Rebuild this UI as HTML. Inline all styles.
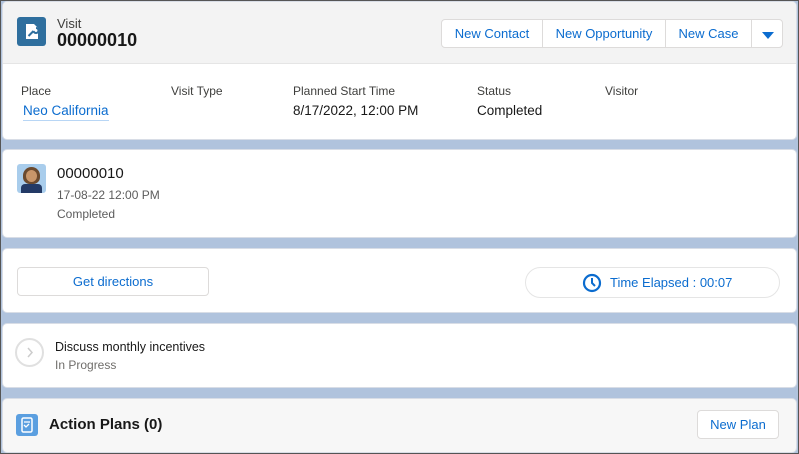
<!DOCTYPE html>
<html><head><meta charset="utf-8"><style>
*{box-sizing:border-box;margin:0;padding:0}
body{width:799px;height:454px;background:#b0c3dd;font-family:"Liberation Sans",Arial,sans-serif;position:relative;overflow:hidden;border:1px solid #555;}
.card{position:absolute;left:2px;width:793px;background:#fff;border-radius:4px;box-shadow:0 0 0 1px #d8dde6}
.t{position:absolute;white-space:nowrap}
.lbl{font-size:12px;color:#3e3e3c}
.val{font-size:13.5px;color:#181818}
</style></head><body>
<div class="card" style="top:1px;height:137px;overflow:hidden">
 <div style="position:absolute;left:0;top:0;width:100%;height:62px;background:#f3f3f3;border-bottom:1px solid #e5e5e5"></div>
 <div style="position:absolute;left:14px;top:15px;width:29px;height:29px;background:#2f6f9e;border-radius:3px">
  <svg width="29" height="29" viewBox="0 0 29 29"><path d="M9 7h8l4 4v11H9z" fill="#fff"/><path d="M11.5 19l5-5m0 0a2.5 2.5 0 1 0 2.5-3" stroke="#2f6f9e" stroke-width="2" fill="none"/></svg>
 </div>
 <div class="t" style="left:54px;top:14px;font-size:13px;color:#3e3e3c">Visit</div>
 <div class="t" style="left:54px;top:28px;font-size:18px;font-weight:bold;color:#181818">00000010</div>
 <div style="position:absolute;left:438px;top:17px;width:342px;height:29px;border:1px solid #dddbda;border-radius:4px;background:#fff;display:flex;font-size:13px;color:#0b6ccf">
  <div style="width:101px;border-right:1px solid #dddbda;text-align:center;line-height:27px">New Contact</div>
  <div style="width:123px;border-right:1px solid #dddbda;text-align:center;line-height:27px">New Opportunity</div>
  <div style="width:86px;border-right:1px solid #dddbda;text-align:center;line-height:27px">New Case</div>
  <div style="flex:1;position:relative"><div style="position:absolute;left:10px;top:12px;border-left:6px solid transparent;border-right:6px solid transparent;border-top:7px solid #0b6ccf"></div></div>
 </div>
 <div class="t lbl" style="left:18px;top:82px">Place</div>
 <div class="t" style="left:20px;top:101px;font-size:13.5px;color:#0b6ccf;border-bottom:1px solid #b8d6f5;padding-bottom:2px">Neo California</div>
 <div class="t lbl" style="left:168px;top:82px">Visit Type</div>
 <div class="t lbl" style="left:290px;top:82px">Planned Start Time</div>
 <div class="t val" style="left:290px;top:101px">8/17/2022, 12:00 PM</div>
 <div class="t lbl" style="left:474px;top:82px">Status</div>
 <div class="t val" style="left:474px;top:101px">Completed</div>
 <div class="t lbl" style="left:602px;top:82px">Visitor</div>
</div>
<div class="card" style="top:149px;height:87px">
 <div style="position:absolute;left:14px;top:14px;width:29px;height:29px;background:#a9cdec;border-radius:3px;overflow:hidden">
  <div style="position:absolute;left:6px;top:3px;width:17px;height:17px;border-radius:50% 50% 40% 40%;background:#6b4a2e"></div>
  <div style="position:absolute;left:9px;top:6px;width:11px;height:12px;border-radius:50%;background:#c8966a"></div>
  <div style="position:absolute;left:4px;top:20px;width:21px;height:9px;background:#233a66;border-radius:4px 4px 0 0"></div>
 </div>
 <div class="t" style="left:54px;top:15px;font-size:15px;color:#181818">00000010</div>
 <div class="t" style="left:54px;top:38px;font-size:12px;color:#5c5c5c">17-08-22 12:00 PM</div>
 <div class="t" style="left:54px;top:57px;font-size:12px;color:#5c5c5c">Completed</div>
</div>
<div class="card" style="top:248px;height:63px">
 <div style="position:absolute;left:14px;top:18px;width:192px;height:29px;border:1px solid #dddbda;border-radius:4px;text-align:center;line-height:27px;font-size:13px;color:#0b6ccf">Get directions</div>
 <div style="position:absolute;left:522px;top:18px;width:255px;height:31px;border:1px solid #e5e5e5;border-radius:16px;font-size:13px;color:#0b6ccf">
  <svg style="position:absolute;left:56px;top:5px" width="20" height="20" viewBox="0 0 20 20"><circle cx="10" cy="10" r="8" stroke="#0b6ccf" stroke-width="2.2" fill="none"/><path d="M10 5v5l3 3" stroke="#0b6ccf" stroke-width="2" fill="none"/></svg>
  <span class="t" style="left:84px;top:7px">Time Elapsed : 00:07</span>
 </div>
</div>
<div class="card" style="top:323px;height:63px">
 <div style="position:absolute;left:12px;top:14px;width:29px;height:29px;border:2px solid #e0e0e0;border-radius:50%"><svg width="25" height="25" viewBox="0 0 25 25"><path d="M11 8l4 4.5-4 4.5" stroke="#ccc" stroke-width="1.5" fill="none"/></svg></div>
 <div class="t" style="left:52px;top:16px;font-size:12.5px;color:#181818">Discuss monthly incentives</div>
 <div class="t" style="left:52px;top:34px;font-size:12px;color:#706e6b">In Progress</div>
</div>
<div class="card" style="top:398px;height:53px;background:#f7f7f7">
 <div style="position:absolute;left:13px;top:15px;width:22px;height:22px;background:#5b9fe0;border-radius:3px"><svg width="22" height="22" viewBox="0 0 22 22"><rect x="6" y="4" width="10" height="14" rx="1.5" fill="none" stroke="#fff" stroke-width="1.5"/><path d="M8 8h6M8 11l2 2 3-3" stroke="#fff" stroke-width="1.3" fill="none"/></svg></div>
 <div class="t" style="left:46px;top:17px;font-size:15px;font-weight:bold;color:#181818">Action Plans (0)</div>
 <div style="position:absolute;left:694px;top:11px;width:82px;height:29px;border:1px solid #dddbda;border-radius:4px;background:#fff;text-align:center;line-height:27px;font-size:13px;color:#0b6ccf">New Plan</div>
</div>
</body></html>
